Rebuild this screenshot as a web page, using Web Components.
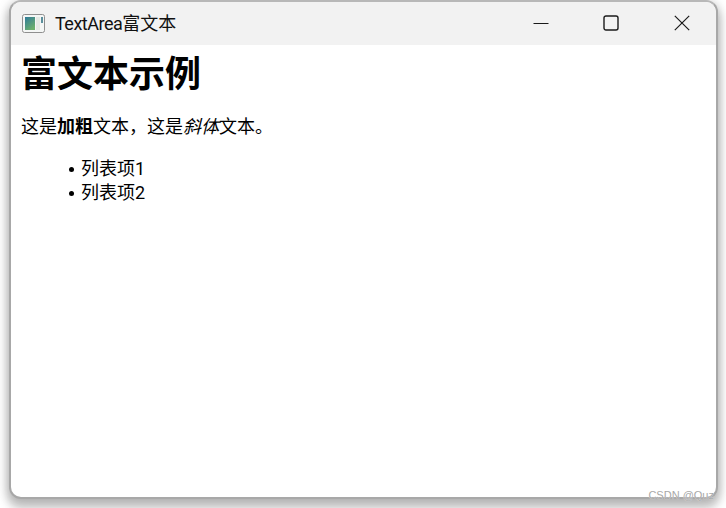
<!DOCTYPE html>
<html lang="zh">
<head>
<meta charset="utf-8">
<title>TextArea富文本</title>
<style>
html, body { margin: 0; height: 100%; }
body {
	width: 726px;
	height: 508px;
	overflow: hidden;
	background: #fff;
	font-family: Roboto, "Noto Sans CJK SC", sans-serif;
}
</style>
</head>
<body>
<desktop-shot>
	<app-window title="TextArea富文本">
		<rich-text></rich-text>
	</app-window>
	<span slot="mark">CSDN @Quz</span>
</desktop-shot>

<template id="tplShot">
	<style>
	:host {
		display: block;
		position: relative;
		box-sizing: border-box;
		width: 726px;
		height: 508px;
		padding: 0 8px 9px 9px;
		background: #fff;
		overflow: hidden;
	}
	.mark {
		position: absolute;
		right: 12px;
		bottom: 7px;
		font: 11px/12px "Liberation Sans", sans-serif;
		color: #a8a8a8;
		text-shadow: 0 0 1px #fff;
	}
	</style>
	<slot></slot>
	<div class="mark"><slot name="mark"></slot></div>
</template>

<template id="tplWindow">
	<style>
	:host {
		display: flex;
		flex-direction: column;
		box-sizing: border-box;
		height: 100%;
		border-radius: 12px;
		border: 2px solid #a8a8a8;
		border-top-color: #b8b8b8;
		background: #fff;
		overflow: hidden;
		box-shadow: 0 8px 10px 2px rgba(0,0,0,0.2), 0 1px 12px rgba(0,0,0,0.2);
	}
	.bar {
		flex: 0 0 43px;
		display: flex;
		align-items: center;
		background: #f2f2f2;
		padding-left: 11px;
		color: #111;
	}
	.bar svg { display: block; }
	.title {
		margin-left: 10px;
		font-size: 18px;
		white-space: nowrap;
		flex: 1;
		position: relative;
		top: -2px;
	}
	.title span { letter-spacing: -0.5px; }
	.btn {
		flex: 0 0 70px;
		display: flex;
		justify-content: center;
		align-items: center;
		position: relative;
		top: -1px;
	}
	.btn.close { flex-basis: 68px; margin-left: 2px; }
	.content { flex: 1; min-height: 0; }
	</style>
	<div class="bar">
		<svg width="23" height="19" viewBox="0 0 23 19">
			<defs><linearGradient id="g" x1="0" y1="0" x2="0.6" y2="1"><stop offset="0" stop-color="#2f7a9a"/><stop offset="1" stop-color="#6bb06c"/></linearGradient></defs>
			<rect x="0.5" y="0.5" width="22" height="18" rx="2" fill="#f4f6f5" stroke="#8f8f8f"/>
			<rect x="3" y="3" width="10" height="13" fill="url(#g)"/>
			<rect x="14" y="3" width="4" height="13" fill="#e4e9e4"/>
			<rect x="19" y="3" width="2" height="6" fill="#5c8f9c"/>
		</svg>
		<div class="title"></div>
		<div class="btn"><svg width="16" height="16" viewBox="0 0 16 16"><path d="M0.5 8.5H15.5" stroke="#1a1a1a" stroke-width="1" fill="none"/></svg></div>
		<div class="btn"><svg width="16" height="16" viewBox="0 0 16 16"><rect x="1" y="1" width="14" height="14" rx="2" stroke="#1a1a1a" stroke-width="1.4" fill="none"/></svg></div>
		<div class="btn close"><svg width="16" height="16" viewBox="0 0 16 16"><path d="M0.8 0.8L15.2 15.2M15.2 0.8L0.8 15.2" stroke="#1a1a1a" stroke-width="1.2" fill="none"/></svg></div>
	</div>
	<div class="content"><slot></slot></div>
</template>

<template id="tplRich">
	<style>
	:host {
		display: block;
		padding: 0 10px;
		color: #000;
		font-size: 18px;
		line-height: 24px;
		font-family: Roboto, "Noto Sans CJK SC", sans-serif;
	}
	h1 {
		margin: 6px 0 0;
		font-size: 36px;
		line-height: 48px;
		font-weight: 700;
	}
	p { margin: 16px 0 0; }
	ul {
		margin: 18px 0 0;
		padding: 0 0 0 60px;
		list-style: none;
	}
	li { position: relative; }
	li::before {
		content: "";
		position: absolute;
		left: -12px;
		top: 10px;
		width: 5px;
		height: 5px;
		border-radius: 50%;
		background: #000;
	}
	</style>
	<h1>富文本示例</h1>
	<p>这是<b>加粗</b>文本，这是<i>斜体</i>文本。</p>
	<ul>
		<li>列表项1</li>
		<li>列表项2</li>
	</ul>
</template>

<script>
(function () {
	function define(name, tplId, init) {
		customElements.define(name, class extends HTMLElement {
			constructor() {
				super();
				this.attachShadow({mode: 'open'});
				this.shadowRoot.appendChild(document.getElementById(tplId).content.cloneNode(true));
			}
			connectedCallback() {
				if (init) init(this);
			}
		});
	}
	define('desktop-shot', 'tplShot');
	define('app-window', 'tplWindow', function (el) {
		var title = el.getAttribute('title');
		var elTitle = el.shadowRoot.querySelector('.title');
		// latin part runs narrower than Roboto in the reference
		var m = title.match(/^[A-Za-z]+/);
		var elLatin = document.createElement('span');
		elLatin.textContent = m ? m[0] : '';
		elTitle.appendChild(elLatin);
		elTitle.appendChild(document.createTextNode(title.slice(elLatin.textContent.length)));
		el.removeAttribute('title');
	});
	define('rich-text', 'tplRich');
})();
</script>
</body>
</html>
